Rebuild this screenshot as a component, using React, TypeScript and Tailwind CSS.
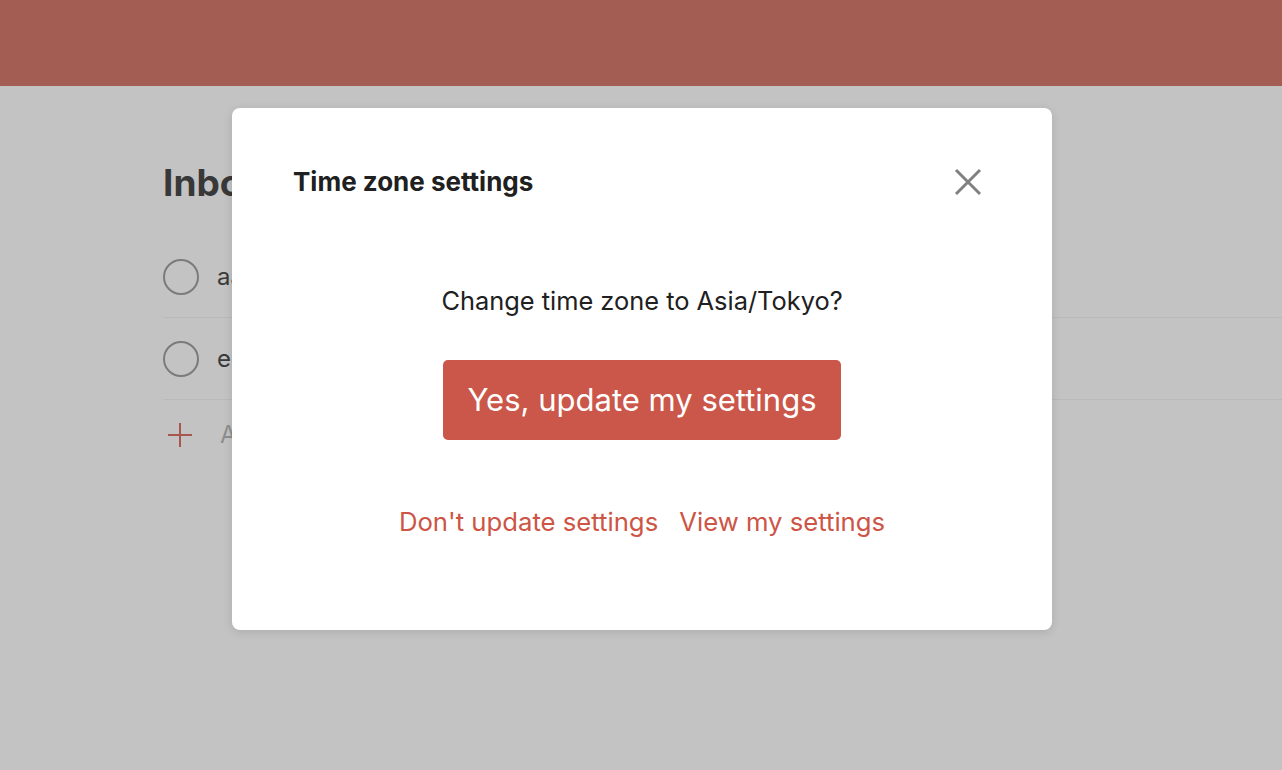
import React from 'react';

const FONT = { fontFamily: 'Inter, "Noto Sans", "Liberation Sans", sans-serif' };

const TaskRow = ({ label }: { label: string }) => (
  <div className="flex items-center h-[82px] border-b border-[#b9b9b9]">
    <div className="w-[36px] h-[36px] rounded-full border-2 border-[#7b7b7b]" />
    <span className="ml-[18px] text-[24px] text-[#3a3a3a]">{label}</span>
  </div>
);

export default function App() {
  return (
    <div className="relative w-full h-[770px] bg-[#c3c3c3] overflow-hidden" style={FONT}>
      {/* top bar */}
      <div className="h-[86px] bg-[#a35d53]" />

      {/* inbox behind the overlay */}
      <div className="pl-[163px] pt-[78px]">
        <h1 className="text-[37px] font-bold text-[#383838] leading-none">Inbox</h1>
        <div className="mt-[35px]">
          <TaskRow label="aaaa" />
          <TaskRow label="eeee" />
          <div className="flex items-center h-[70px]">
            <svg width="36" height="36" viewBox="0 0 36 36" className="ml-[-1px]">
              <path d="M18 6v24M6 18h24" stroke="#a7574d" strokeWidth="2" />
            </svg>
            <span className="ml-[22px] text-[24px] text-[#8e8e8e]">Add task</span>
          </div>
        </div>
      </div>

      {/* modal */}
      <div className="absolute left-[232px] top-[108px] w-[820px] h-[522px] bg-white rounded-[8px] shadow-[0_2px_10px_rgba(0,0,0,0.12)] flex flex-col">
        <div className="flex items-center justify-between pl-[61px] pr-[68px] pt-[58px]">
          <h2 className="text-[26px] font-bold text-[#202020] leading-[32px]">Time zone settings</h2>
          <button className="w-[32px] h-[32px] flex items-center justify-center">
            <svg width="28" height="28" viewBox="0 0 28 28">
              <path d="M2 2l24 24M26 2L2 26" stroke="#808080" strokeWidth="3" />
            </svg>
          </button>
        </div>
        <div className="flex flex-col items-center mt-[88px]">
          <p className="text-[25.4px] text-[#202020] leading-[30px]">Change time zone to Asia/Tokyo?</p>
          <button className="mt-[44px] w-[398px] h-[80px] bg-[#ca5749] rounded-[5px] text-white text-[31px]">
            Yes, update my settings
          </button>
          <div className="mt-[67px] flex gap-[21px] text-[25.7px] text-[#cc5546] leading-[30px]">
            <span>Don't update settings</span>
            <span>View my settings</span>
          </div>
        </div>
      </div>
    </div>
  );
}
